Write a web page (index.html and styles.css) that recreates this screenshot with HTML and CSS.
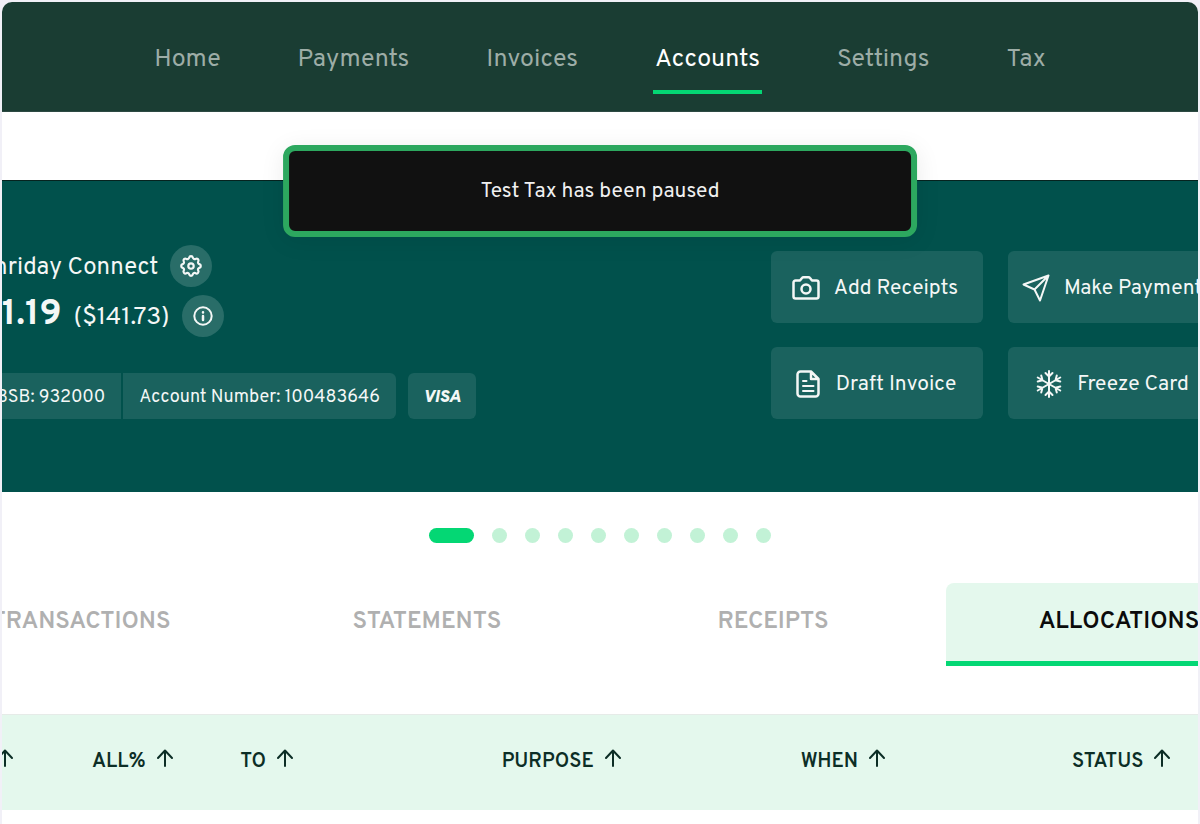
FILE: index.html
```html
<!DOCTYPE html>
<html lang="en">
<head>
    <meta charset="UTF-8">
    <meta name="viewport" content="width=device-width, initial-scale=1.0">
    <title>Accounts</title>
    <link rel="stylesheet" href="styles.css">
</head>
<body>
    <!-- Shared sort arrow -->
    <svg class="sprite" aria-hidden="true">
        <symbol id="arrow-up" viewBox="0 0 16 18">
            <path d="M8 17V2M1 9l7-7.5L15 9"/>
        </symbol>
    </svg>

    <div class="app">
        <nav class="navbar">
            <a href="#" class="nav-link">Home</a>
            <a href="#" class="nav-link">Payments</a>
            <a href="#" class="nav-link">Invoices</a>
            <a href="#" class="nav-link active">Accounts</a>
            <a href="#" class="nav-link">Settings</a>
            <a href="#" class="nav-link">Tax</a>
        </nav>

        <div class="toast" role="status">Test Tax has been paused</div>

        <main class="content">
            <section class="account">
                <div class="account-info">
                    <div class="account-name">
                        <span>Thriday Connect</span>
                        <button class="round-button" aria-label="Account settings">
                            <svg width="26" height="26" viewBox="0 0 24 24">
                                <path d="M10.3 4.3c.4-1.8 3-1.8 3.4 0a1.7 1.7 0 0 0 2.6 1.1c1.5-.9 3.3.8 2.4 2.4a1.7 1.7 0 0 0 1 2.5c1.8.5 1.8 3 0 3.4a1.7 1.7 0 0 0-1 2.6c.9 1.5-.9 3.3-2.4 2.4a1.7 1.7 0 0 0-2.6 1c-.4 1.8-3 1.8-3.4 0a1.7 1.7 0 0 0-2.6-1c-1.5.9-3.3-.9-2.4-2.4a1.7 1.7 0 0 0-1-2.6c-1.8-.4-1.8-2.9 0-3.4a1.7 1.7 0 0 0 1-2.5c-.9-1.6.9-3.3 2.4-2.4a1.7 1.7 0 0 0 2.6-1.1z"/>
                                <circle cx="12" cy="12" r="2.5"/>
                            </svg>
                        </button>
                    </div>
                    <div class="account-balance">
                        <div class="amounts">
                            <strong>$1.19</strong>
                            <span>($141.73)</span>
                        </div>
                        <button class="round-button" aria-label="Balance details">
                            <svg width="24" height="24" viewBox="0 0 24 24">
                                <circle cx="12" cy="12" r="8.7"/>
                                <path d="M12 12v4M12 8.3v.2" stroke-width="2.5"/>
                            </svg>
                        </button>
                    </div>
                    <div class="account-details">
                        <div class="detail-group">
                            <span class="detail">BSB: 932000</span>
                            <span class="detail">Account Number: 100483646</span>
                        </div>
                        <span class="visa">VISA</span>
                    </div>
                </div>

                <div class="actions">
                    <button class="action">
                        <svg width="28" height="28" viewBox="0 0 28 28">
                            <path d="M1.5 8.5a2 2 0 0 1 2-2H8L10 4q.6-.8 1.6-.8h4.8q1 0 1.600.8l2 2.500h4.500a2 2 0 0 1 2 2v14a2 2 0 0 1-2 2h-21a2 2 0 0 1-2-2z"/>
                            <circle cx="14" cy="15" r="4.5"/>
                        </svg>
                        Add Receipts
                    </button>
                    <button class="action">
                        <svg class="thin" width="28" height="28" viewBox="0 0 28 28">
                            <path d="M26.5 1.5l-25 9 11 5 5.5 11zM26.5 1.5l-14 14"/>
                        </svg>
                        Make Payment
                    </button>
                    <button class="action">
                        <svg width="28" height="28" viewBox="0 0 28 28">
                            <path d="M17 1.5H6.5a3 3 0 0 0-3 3v19a3 3 0 0 0 3 3h15a3 3 0 0 0 3-3V9zM17 1.5V9h7.5"/>
                            <path class="lines" d="M9 11h3.500M9 16h10.500M9 21h10.500"/>
                        </svg>
                        Draft Invoice
                    </button>
                    <button class="action">
                        <svg class="thin" width="28" height="28" viewBox="0 0 28 28">
                            <path id="snow-arm" d="M14 1v26M10.500 3L14 6.500 17.500 3M10.500 25l3.500-3.500 3.500 3.500"/>
                            <use href="#snow-arm" transform="rotate(60 14 14)"/>
                            <use href="#snow-arm" transform="rotate(120 14 14)"/>
                        </svg>
                        Freeze Card
                    </button>
                </div>
            </section>

            <div class="pager">
                <button class="dot current" aria-label="Account 1"></button>
                <button class="dot" aria-label="Account 2"></button>
                <button class="dot" aria-label="Account 3"></button>
                <button class="dot" aria-label="Account 4"></button>
                <button class="dot" aria-label="Account 5"></button>
                <button class="dot" aria-label="Account 6"></button>
                <button class="dot" aria-label="Account 7"></button>
                <button class="dot" aria-label="Account 8"></button>
                <button class="dot" aria-label="Account 9"></button>
                <button class="dot" aria-label="Account 10"></button>
            </div>

            <div class="tabs">
                <a href="#" class="tab">TRANSACTIONS</a>
                <a href="#" class="tab">STATEMENTS</a>
                <a href="#" class="tab">RECEIPTS</a>
                <a href="#" class="tab active">ALLOCATIONS</a>
            </div>

            <table class="allocations">
                <thead>
                    <tr>
                        <th class="col-from">FROM <svg><use href="#arrow-up"/></svg></th>
                        <th class="col-all">ALL% <svg><use href="#arrow-up"/></svg></th>
                        <th class="col-to">TO <svg><use href="#arrow-up"/></svg></th>
                        <th class="col-purpose">PURPOSE <svg><use href="#arrow-up"/></svg></th>
                        <th class="col-when">WHEN <svg><use href="#arrow-up"/></svg></th>
                        <th>STATUS <svg><use href="#arrow-up"/></svg></th>
                    </tr>
                </thead>
            </table>
        </main>
    </div>
</body>
</html>
```

FILE: styles.css
```css
* {
    box-sizing: border-box;
}

body {
    margin: 0;
    background: #f1f0f7;
    font-family: Overpass, Roboto, sans-serif;
    overflow: hidden;
}

a {
    text-decoration: none;
}

button {
    border: none;
    padding: 0;
    font-family: inherit;
    color: inherit;
    cursor: pointer;
}

svg {
    fill: none;
    stroke: currentColor;
    stroke-width: 2;
    stroke-linecap: round;
    stroke-linejoin: round;
}

.sprite {
    display: none;
}

.app {
    position: relative;
    margin: 2px 2px 0;
    min-height: calc(100vh - 2px);
    background: #fff;
    border-radius: 10px 10px 0 0;
    overflow: hidden;
}

.navbar {
    display: flex;
    justify-content: center;
    gap: 73px;
    height: 110px;
    padding-top: 36px;
    background: #1a3d33;
    border-bottom: 1px solid #2d4a43;
}

.nav-link {
    height: 56px;
    padding: 0 2px;
    font-size: 25px;
    line-height: 44px;
    color: #9dada7;
}

.nav-link.active {
    color: #fff;
    border-bottom: 4px solid #04d774;
}

.toast {
    position: absolute;
    top: 143px;
    left: 50%;
    transform: translateX(-50%);
    width: 53%;
    padding: 25px 24px 23px;
    border: 6px solid #2da85f;
    border-radius: 12px;
    background: #111;
    color: #f0f0f0;
    font-size: 21px;
    line-height: 32px;
    text-align: center;
    box-shadow: 0 4px 24px rgba(0, 0, 0, 0.08);
}

/* Content runs past both edges of the window */
.content {
    margin: 68px -94px 0;
}

.account {
    display: flex;
    justify-content: space-between;
    align-items: flex-start;
    height: 312px;
    padding: 64px 72px 0;
    border-top: 1px solid #06231f;
    background: #01514c;
    color: #f4f7f6;
}

.account-name,
.account-balance {
    display: flex;
    align-items: center;
    gap: 12px;
    height: 42px;
    font-size: 24px;
    line-height: 42px;
}

.account-name span {
    padding-top: 4px;
}

.account-balance {
    margin-top: 8px;
}

.amounts {
    display: flex;
    align-items: baseline;
    gap: 12px;
    font-size: 25px;
}

.amounts strong {
    font-size: 36px;
}

.round-button {
    display: flex;
    align-items: center;
    justify-content: center;
    width: 42px;
    height: 42px;
    border-radius: 50%;
    background: rgba(255, 255, 255, 0.16);
}

.account-details {
    display: flex;
    gap: 12px;
    height: 46px;
    margin-top: 36px;
    font-size: 18px;
    line-height: 50px;
}

.detail-group {
    display: flex;
    gap: 2px;
    border-radius: 6px;
    overflow: hidden;
}

.detail {
    padding: 0 16px;
    background: rgba(255, 255, 255, 0.1);
}

.visa {
    width: 68px;
    border-radius: 6px;
    background: rgba(255, 255, 255, 0.1);
    font-size: 17px;
    font-weight: 900;
    font-style: italic;
    text-align: center;
}

.actions {
    display: grid;
    grid-template-columns: 212px 212px;
    gap: 24px 25px;
    padding-top: 6px;
}

.action {
    display: flex;
    align-items: center;
    justify-content: center;
    gap: 14px;
    height: 72px;
    padding: 2px 4px 0 0;
    border-radius: 6px;
    background: rgba(255, 255, 255, 0.1);
    font-size: 21px;
    white-space: nowrap;
}

.action svg {
    flex: none;
    stroke-width: 2.5;
}

.action svg.thin {
    stroke-width: 2;
}

.action .lines {
    stroke-width: 2;
}

.pager {
    display: flex;
    justify-content: center;
    gap: 18px;
    padding: 36px 0 40px;
}

.dot {
    width: 15px;
    height: 15px;
    border-radius: 8px;
    background: #c2f2d6;
}

.dot.current {
    width: 45px;
    background: #04d774;
}

.tabs {
    display: grid;
    grid-template-columns: repeat(4, 1fr);
    margin-bottom: 48px;
}

.tab {
    height: 83px;
    font-size: 24px;
    font-weight: 600;
    line-height: 79px;
    text-align: center;
    color: #b0b0b0;
}

.tab.active {
    border-bottom: 5px solid #04d774;
    border-radius: 8px 8px 0 0;
    background: #e4f8ed;
    color: #0b0b0b;
}

.allocations {
    width: 100%;
    table-layout: fixed;
    border-collapse: collapse;
    border-top: 1px solid #e6ebe8;
    background: #e4f8ed;
}

.allocations th {
    height: 95px;
    padding: 0;
    font-size: 20px;
    font-weight: 600;
    text-align: left;
    color: #0c2e26;
}

.allocations svg {
    width: 16px;
    height: 18px;
    margin-left: 6px;
}

.allocations .col-from {
    width: 13.3%;
    padding-left: 22px;
}

.col-all {
    width: 10.7%;
}

.col-to {
    width: 18.9%;
}

.col-purpose {
    width: 21.6%;
}

.col-when {
    width: 19.6%;
}
```
